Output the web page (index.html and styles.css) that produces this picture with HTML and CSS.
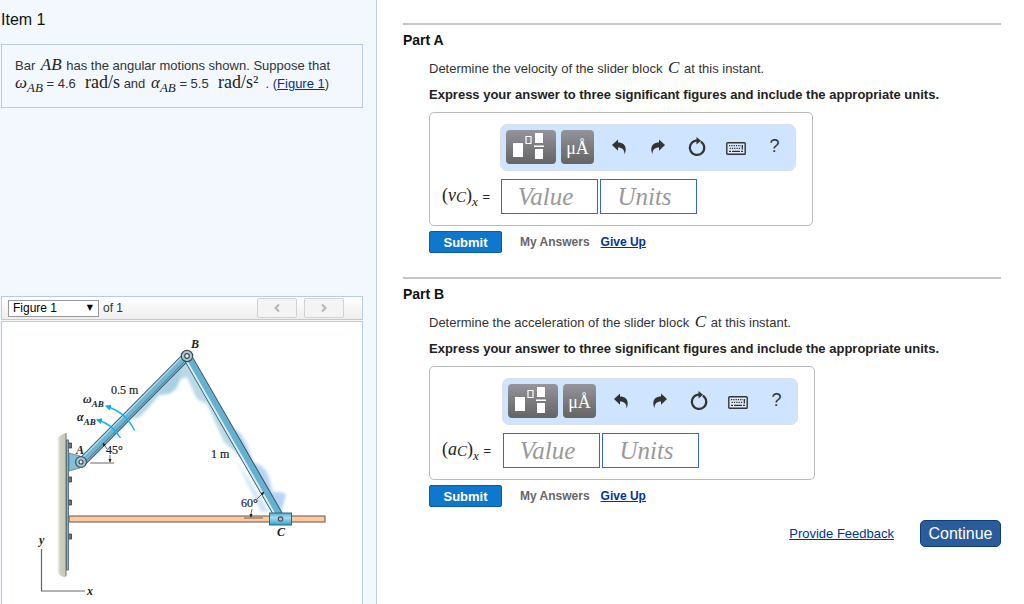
FILE: index.html
```html
<!DOCTYPE html>
<html lang="en">
<head>
<meta charset="utf-8">
<title>Item 1</title>
<link rel="stylesheet" href="styles.css">
</head>
<body>
<svg class="sprite" aria-hidden="true">
  <symbol id="i-template" viewBox="0 0 50 34">
    <g fill="#fff"><path d="M7 13h10v14H7zM29 3h8v10h-8zM29 19h8v10h-8zM28 15.500h10v1.500h-10z"/></g>
    <path d="M20 6.500h5v7h-5z" fill="none" stroke="#fff" stroke-width="1.200"/>
  </symbol>
  <symbol id="i-undo" viewBox="0 0 16 16"><path d="M1 6 7 .5v3.100C13.500 3.600 16.500 8.500 13.600 15.500 13.500 11 11.500 8.600 7 8.600v3.100z" fill="#333"/></symbol>
  <symbol id="i-redo" viewBox="0 0 16 16"><path d="M15 6 9 .5v3.100C2.500 3.600-.5 8.500 2.400 15.500 2.500 11 4.500 8.600 9 8.600v3.100z" fill="#333"/></symbol>
  <symbol id="i-reset" viewBox="0 0 20 20"><path d="M13.800 4.600A7.200 7.200 0 1 1 8.500 3.700h2" fill="none" stroke="#333" stroke-width="2.200"/><path d="M9.500 0 14 3.700 9.500 7.500z" fill="#333"/></symbol>
  <symbol id="i-keyboard" viewBox="0 0 20 13"><rect x=".8" y=".8" width="18.400" height="11.400" rx=".8" fill="#dcebfb" stroke="#333" stroke-width="1.400"/><path d="M3 3.700h12M3.600 6.300h11" stroke="#333" stroke-width="1.300" stroke-dasharray="1.300 1"/><path d="M3 9.300h2m1 0h8m1 0h2M16.300 3v4.400" stroke="#333" stroke-width="1.300"/></symbol>
</svg>
<div class="page">
  <aside class="sidebar">
    <section>
      <h1 class="item-title">Item 1</h1>
      <div class="problem">
        Bar <i class="math name">AB</i> has the angular motions shown. Suppose that
        <br><i class="math">ω<sub>AB</sub></i> = 4.6 &nbsp;<span class="math unit">rad/s</span> and <i class="math alpha">α<sub>AB</sub></i> = 5.5 &nbsp;<span class="math unit">rad/s²</span> &nbsp;. (<a href="#figure">Figure 1</a>)
      </div>
    </section>
    <section class="figure-panel" id="figure">
      <div class="figure-bar">
        <span class="picker"><select id="fig" aria-label="Figure"><option>Figure 1</option></select></span>
        <label class="figure-count" for="fig">of 1</label>
        <button class="step" aria-label="Previous figure"><svg width="8" height="10" viewBox="0 0 8 10"><path d="M6 1.500 2.500 5 6 8.500"/></svg></button>
        <button class="step" aria-label="Next figure"><svg width="8" height="10" viewBox="0 0 8 10"><path d="M2 1.500 5.500 5 2 8.500"/></svg></button>
      </div>
      <div class="figure-body">
        <svg class="diagram" viewBox="2 322 360 282" role="img" aria-label="Linkage ABC">
          <defs>
            <linearGradient id="wall"><stop offset="0" stop-color="#d2d2c4" stop-opacity="0"/><stop offset=".35" stop-color="#cfcfc0"/><stop offset="1" stop-color="#c6c7b6"/></linearGradient>
            <linearGradient id="block" x2="0" y2="1"><stop offset="0" stop-color="#57a9c9"/><stop offset=".4" stop-color="#a5def1"/><stop offset="1" stop-color="#35a0c6"/></linearGradient>
            <filter id="soft" x="-30%" y="-30%" width="160%" height="160%"><feGaussianBlur stdDeviation="1.400"/></filter>
            <marker id="tip" viewBox="0 0 8 8" refX="5" refY="4" markerWidth="6" markerHeight="6" markerUnits="userSpaceOnUse" orient="auto-start-reverse"><path d="M0 0 8 4 0 8z" fill="#14a8e8"/></marker>
            <marker id="dark" viewBox="0 0 6 6" refX="5" refY="3" markerWidth="4" markerHeight="4" markerUnits="userSpaceOnUse" orient="auto"><path d="M0 .5 6 3 0 5.500z" fill="#222"/></marker>
          </defs>
          <path d="M57 438q5-4 9-5v144q-6 0-9-6z" fill="url(#wall)"/>
          <g filter="url(#soft)">
            <path d="M93 460 187 360l-6 18-5 11-7 5-10 1-11 13-9 9-14 5-12 15-17 18z" fill="#a9d0e2"/>
            <path d="M182 362 194 362l54 95-5 3-8-8-11-10-12-27-5-11-10-5-6-13-4-9-7 2z" fill="#b9d9e5"/>
            <path d="M232 428q10 3 17 22l4 13q13 1 17 19l3 10q7-1 13 2l-5 20h-5z" fill="#b5d4f5"/>
            <path d="m235 458 35 54h-9z" fill="#cde8f3"/>
          </g>
          <path d="M66 433v143" stroke="#777"/>
          <g fill="#777" stroke="#333" stroke-width=".8"><path d="M68.500 443h3v5h-3zM68.500 477h3v5h-3zM68.500 500h3v5h-3zM68.500 534h3v5h-3z"/></g>
          <rect x="69" y="516" width="256" height="6" fill="#ffcaa0" stroke="#625550"/>
          <rect x="66.500" y="440" width="2" height="130" fill="#85b5ca" stroke="#465c68" stroke-width=".8"/>
          <path d="m69 453 11 3v12l-11 3z" fill="#83bfdb" stroke="#567381" stroke-width=".7"/>
          <g fill="none">
            <path d="M82 462 187 356" stroke="#39525f" stroke-width="9"/>
            <path d="M82 462 187 356" stroke="#70b5d1" stroke-width="7.400"/>
            <path d="m80.500 459.500 105-106" stroke="#b5dceb" stroke-width="1.300"/>
            <path d="m83.500 463.500 105-106" stroke="#50666e" stroke-width=".8"/>
            <path d="m187 356 92 160" stroke="#39525f" stroke-width="9.400"/>
            <path d="m187 356 92 160" stroke="#66b1cf" stroke-width="7.600"/>
            <path d="m184.800 358 91 158" stroke="#d8edf3" stroke-width="1.800"/>
          </g>
          <g stroke="#414f55" stroke-width="1.200"><circle cx="187" cy="356" r="5.700" fill="#a2cad8"/><circle cx="187" cy="356" r="2.300" fill="#eee"/><circle cx="81" cy="462" r="5.400" fill="#a2cad8"/><circle cx="81" cy="462" r="2" fill="#eee"/></g>
          <rect x="269.500" y="513" width="22" height="12" fill="url(#block)" stroke="#276980"/>
          <circle cx="280.500" cy="519" r="2.200" fill="#b9c6cb" stroke="#44525a" stroke-width="1.200"/>
          <g fill="none" stroke="#18b0ee" stroke-width="1.400" marker-start="url(#tip)"><path d="M107 406.500q19 6 27.500 24"/></g>
          <g fill="none" stroke="#18b0ee" stroke-width="1.400" marker-start="url(#tip)"><path d="M98 420q14 4 22.500 18"/></g>
          <g fill="none" stroke="#444" stroke-width=".8"><path d="M90 463h24"/><path d="M110 455v7" marker-end="url(#dark)"/><path d="m107 449-4-6" marker-end="url(#dark)"/><path d="M244 518h19"/><path d="M252 509q-1 3-1 8" marker-end="url(#dark)"/><path d="m257 499 7-7" marker-end="url(#dark)"/></g>
          <path d="M41.500 549v42H85" fill="none" stroke="#666" stroke-width="1.200"/>
          <g class="labels">
            <text x="111" y="394">0.5 m</text><text x="211" y="458">1 m</text><text x="106" y="454">45°</text><text x="241" y="507">60°</text>
            <g class="var"><text x="191" y="348">B</text><text x="76" y="454">A</text><text x="277" y="536">C</text><text x="39" y="544">y</text><text x="87" y="595">x</text>
            <text x="83" y="403">ω<tspan class="small" dy="4">AB</tspan></text><text x="77" y="421">α<tspan class="small" dy="4">AB</tspan></text></g>
          </g>
        </svg>
      </div>
    </section>
  </aside>
  <main class="content">
    <section class="part">
      <h2 class="part-title">Part A</h2>
      <div class="part-body">
        <p class="ask">Determine the velocity of the slider block <i class="math name">C</i> at this instant.</p>
        <p class="hint">Express your answer to three significant figures and include the appropriate units.</p>
        <div class="answer">
          <div class="toolbar">
            <button class="tool" aria-label="Templates"><svg width="50" height="34"><use href="#i-template"/></svg></button>
            <button class="tool tool-units">μÅ</button>
            <div class="icons">
              <button class="icon" aria-label="Undo"><svg width="16" height="16"><use href="#i-undo"/></svg></button>
              <button class="icon" aria-label="Redo"><svg width="16" height="16"><use href="#i-redo"/></svg></button>
              <button class="icon" aria-label="Reset"><svg width="20" height="20"><use href="#i-reset"/></svg></button>
              <button class="icon icon-keyboard" aria-label="Keyboard"><svg width="20" height="13"><use href="#i-keyboard"/></svg></button>
              <button class="icon">?</button>
            </div>
          </div>
          <label class="lhs" for="va"><span class="math"><span class="paren">(</span><i>v<span class="sub">C</span></i><span class="paren">)</span><i><sub>x</sub></i></span> =</label>
          <div class="fields"><input id="va" placeholder="Value"><input aria-label="Units" placeholder="Units"></div>
        </div>
        <div class="actions"><button class="submit">Submit</button><span class="mine">My Answers</span><a href="#">Give Up</a></div>
      </div>
    </section>
    <section class="part">
      <h2 class="part-title">Part B</h2>
      <div class="part-body">
        <p class="ask">Determine the acceleration of the slider block <i class="math name">C</i> at this instant.</p>
        <p class="hint">Express your answer to three significant figures and include the appropriate units.</p>
        <div class="answer answer-wide">
          <div class="toolbar">
            <button class="tool" aria-label="Templates"><svg width="50" height="34"><use href="#i-template"/></svg></button>
            <button class="tool tool-units">μÅ</button>
            <div class="icons">
              <button class="icon" aria-label="Undo"><svg width="16" height="16"><use href="#i-undo"/></svg></button>
              <button class="icon" aria-label="Redo"><svg width="16" height="16"><use href="#i-redo"/></svg></button>
              <button class="icon" aria-label="Reset"><svg width="20" height="20"><use href="#i-reset"/></svg></button>
              <button class="icon icon-keyboard" aria-label="Keyboard"><svg width="20" height="13"><use href="#i-keyboard"/></svg></button>
              <button class="icon">?</button>
            </div>
          </div>
          <label class="lhs" for="vb"><span class="math"><span class="paren">(</span><i>a<span class="sub">C</span></i><span class="paren">)</span><i><sub>x</sub></i></span> =</label>
          <div class="fields"><input id="vb" placeholder="Value"><input aria-label="Units" placeholder="Units"></div>
        </div>
        <div class="actions"><button class="submit">Submit</button><span class="mine">My Answers</span><a href="#">Give Up</a></div>
      </div>
    </section>
    <footer class="footer"><a href="#">Provide Feedback</a><button class="continue">Continue</button></footer>
  </main>
</div>
</body>
</html>
```
FILE: styles.css
```css
* { box-sizing: border-box; }
body { margin: 0; background: #fff; color: #333; font: 13px/18px "Liberation Sans", Arial, sans-serif; }
h1, h2, p { margin: 0; }
button { padding: 0; border: 0; font-family: inherit; cursor: pointer; }
a { color: #039; }
.sprite { display: none; }
.page { display: grid; grid-template-columns: 377fr 647fr; min-height: 100vh; }

.sidebar { display: flex; flex-direction: column; justify-content: space-between; padding: 11px 13px 0 1px; background: #f3f8ff; border-right: 1px solid #bcd0e0; }
.item-title { font-size: 16px; font-weight: normal; line-height: 18px; color: #111; }
.problem { margin-top: 15px; padding: 12px 13px 14px; border: 1px solid #b7cce0; }
.math { font-family: "Liberation Serif", "Times New Roman", serif; font-size: 17px; line-height: 0; color: #222; }
.math sub { font-size: 13px; line-height: 0; }
.name { margin: 0 1px 0 2px; }
.unit { margin-left: 2px; font-size: 18px; }
.alpha { margin-left: 2px; }

.figure-bar { display: flex; align-items: center; height: 24px; padding: 0 18px 0 6px; border: 1px solid #b7cce0; background: linear-gradient(#fff, #eee); }
.picker { position: relative; width: 91px; height: 17px; }
.picker::after { content: "▼"; position: absolute; right: 6px; top: 0; font: 8px/16px "DejaVu Sans", sans-serif; color: #000; pointer-events: none; }
.picker select { display: block; width: 100%; height: 100%; padding: 0 4px; appearance: none; border: 1px solid #999; border-radius: 0; background: #fff; color: #000; font: 12px/15px "Liberation Sans", Arial, sans-serif; }
.figure-count { margin: 0 auto 0 4px; font-size: 12px; }
.step { display: grid; place-items: center; width: 40px; height: 20px; margin-left: 7px; border: 1px solid #d2d2d2; border-radius: 2px; background: #f4f4f4; }
.step svg { fill: none; stroke: #b5b5b5; stroke-width: 2; }
.figure-body { margin-top: 1px; border: 1px solid #b7cce0; border-bottom: 0; background: #fff; }
.diagram { display: block; width: 100%; }
.labels { font: 12px "Liberation Serif", serif; fill: #222; stroke: #222; stroke-width: .2px; }
.var { font-style: italic; font-weight: bold; stroke: none; }
.small { font-size: 9px; }

.content { padding: 23px 23px 0 26px; }
.part { padding-top: 6px; border-top: 2px solid #c6c6c6; }
.part + .part { margin-top: 24px; }
.part-title { font-size: 14px; line-height: 18px; color: #111; }
.part-body { padding: 10px 0 0 26px; }
.ask { line-height: 20px; }
.hint { margin-top: 6px; line-height: 20px; font-weight: bold; color: #222; }
.answer { display: grid; grid-template-columns: 58px auto; width: fit-content; margin-top: 7px; padding: 11px 16px 11px 12px; row-gap: 8px; border: 1px solid #bbb; border-radius: 5px; }
.answer-wide { grid-template-columns: 60px auto; }
.toolbar { grid-column: 2; display: flex; gap: 5px; align-items: center; width: 296px; height: 47px; padding: 0 0 2px 5px; border: 1px solid #dcdfe6; border-radius: 7px; background: #cfe5ff; }
.tool { height: 34px; border-radius: 4px; background: linear-gradient(#94949b, #646464); color: #fff; }
.tool svg { display: block; }
.tool-units { width: 33px; padding-top: 3px; font: 18px/31px "Liberation Serif", serif; }
.icons { display: grid; grid-template-columns: repeat(5, 39px); flex: 1; }
.icon { display: grid; place-items: center; height: 34px; background: none; color: #333; font-size: 18px; }
.icon-keyboard { padding: 3px 0 0; }
.lhs { align-self: center; white-space: nowrap; color: #222; }
.lhs .math { margin-right: 1px; font-size: 18px; }
.lhs .sub { font-size: 15px; vertical-align: -1px; }
.fields { display: flex; gap: 2px; padding-left: 1px; }
.fields input { width: 97px; height: 35px; padding: 0 8px 0 0; border: 1px solid #3367d6; border-radius: 0; background: #fff; font: italic 25px "Liberation Serif", serif; text-align: center; color: #222; }
.fields input::placeholder { color: #999; opacity: 1; }
.actions { display: flex; align-items: center; margin-top: 5px; font-size: 12px; font-weight: bold; }
.submit { width: 73px; height: 22px; margin-right: 18px; border: 1px solid #0b5c9c; border-radius: 2px; background: #0e79cc; color: #fff; font-size: 13px; font-weight: bold; }
.mine { margin-right: 11px; color: #666; }
.footer { display: flex; justify-content: flex-end; align-items: center; gap: 26px; margin-top: 13px; }
.continue { width: 81px; height: 27px; border: 1px solid #123e75; border-radius: 5px; background: #2a5c9a; color: #fff; font-size: 16px; }
```
